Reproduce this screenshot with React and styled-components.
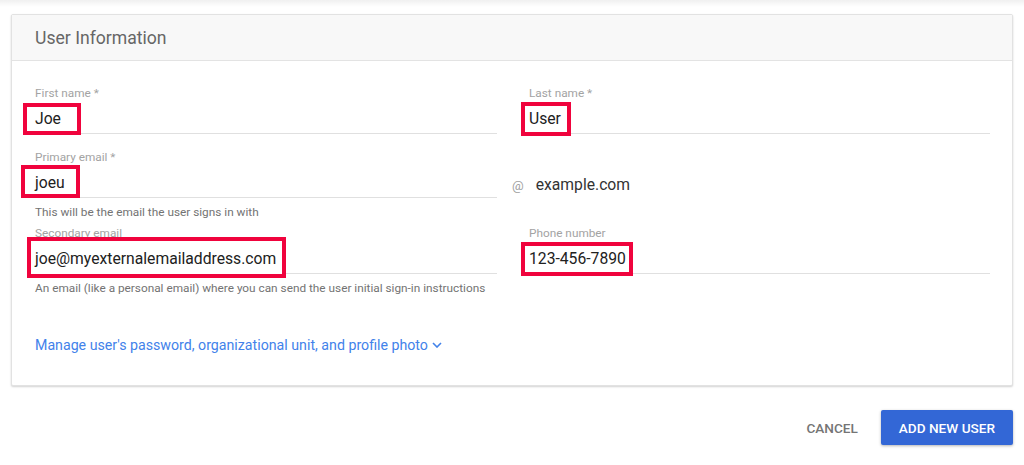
import React from 'react';
import styled, { createGlobalStyle } from 'styled-components';

const GlobalStyle = createGlobalStyle`
  html, body {
    margin: 0;
    padding: 0;
    background: #fff;
    font-family: Roboto, "Liberation Sans", Arial, sans-serif;
  }
  * { box-sizing: border-box; }
`;

const Page = styled.div`
  width: 1024px;
  height: 465px;
  padding: 14px 11px 0;
  background: linear-gradient(rgba(0, 0, 0, 0.06), rgba(0, 0, 0, 0) 7px);
`;

const Card = styled.section`
  background: #fff;
  border: 1px solid #e2e2e2;
  border-radius: 2px;
  box-shadow: 0 1px 2px rgba(0, 0, 0, 0.18);
`;

const CardHeader = styled.header`
  height: 46px;
  padding: 1px 23px 0;
  display: flex;
  align-items: center;
  background: #f8f8f8;
  border-bottom: 1px solid #e3e3e3;
  h2 {
    margin: 0;
    font-size: 17.6px;
    font-weight: 400;
    color: #666;
  }
`;

const CardBody = styled.div`
  padding: 24px 22px 30px 23px;
`;

const Grid = styled.div`
  display: grid;
  grid-template-columns: 462px 461px;
  column-gap: 32px;
`;

const Field = styled.div`
  margin-bottom: ${p => (p.$helper ? 5 : 15)}px;
`;

const Label = styled.div`
  padding-top: 1px;
  font-size: 11.8px;
  line-height: 15px;
  color: #a3a3a3;
`;

const InputLine = styled.div`
  position: relative;
  padding: 6px 0 2px;
  border-bottom: 1px solid #e0e0e0;
`;

const Value = styled.span`
  position: relative;
  z-index: 2;
  font-size: 15.7px;
  line-height: 24px;
  color: #212121;
`;

const Highlight = styled.span`
  position: absolute;
  z-index: 1;
  left: ${p => p.$left}px;
  top: ${p => p.$top}px;
  width: ${p => p.$width}px;
  height: ${p => p.$height}px;
  border: 4px solid #f0033d;
  background: #fff;
`;

const Helper = styled.div`
  margin-top: 6px;
  font-size: 11.8px;
  line-height: 16px;
  color: #737373;
`;

const Domain = styled.div`
  display: flex;
  align-items: baseline;
  gap: 12px;
  margin-left: -17px;
  padding-top: 24px;
  span {
    font-size: 13px;
    color: #a0a0a0;
  }
  strong {
    font-size: 15.7px;
    line-height: 24px;
    font-weight: 400;
    color: #333;
  }
`;

const MoreLink = styled.a`
  display: inline-flex;
  align-items: center;
  gap: 4px;
  margin-top: 34px;
  font-size: 14.2px;
  line-height: 20px;
  color: #4282ea;
  text-decoration: none;
  cursor: pointer;
`;

const Actions = styled.div`
  display: flex;
  justify-content: flex-end;
  align-items: center;
  gap: 23px;
  margin-top: 24px;
`;

const Button = styled.button`
  height: 35px;
  padding: 0 ${p => (p.$primary ? 18 : 0)}px;
  border: none;
  border-radius: 2px;
  font-family: inherit;
  font-size: 13.6px;
  font-weight: 500;
  text-transform: uppercase;
  background: ${p => (p.$primary ? '#3367d6' : 'transparent')};
  color: ${p => (p.$primary ? '#fff' : '#757575')};
  box-shadow: ${p => (p.$primary ? '0 1px 3px rgba(0,0,0,0.3)' : 'none')};
  cursor: pointer;
`;

const TextField = ({ label, value, helper, box }) => (
  <Field $helper={!!helper}>
    <Label>{label}</Label>
    <InputLine>
      {box && <Highlight $left={box[0]} $top={box[1]} $width={box[2]} $height={box[3]} />}
      <Value>{value}</Value>
    </InputLine>
    {helper && <Helper>{helper}</Helper>}
  </Field>
);

const Chevron = () => (
  <svg width="10" height="6" viewBox="0 0 10 6" fill="none">
    <path d="M1 1l4 4 4-4" stroke="#4282ea" strokeWidth="1.6" />
  </svg>
);

export default function App() {
  return (
    <Page>
      <GlobalStyle />
      <Card>
        <CardHeader>
          <h2>User Information</h2>
        </CardHeader>
        <CardBody>
          <Grid>
            <TextField label="First name *" value="Joe" box={[-12, 2, 58, 32]} />
            <TextField label="Last name *" value="User" box={[-8, 1, 50, 34]} />
            <TextField
              label="Primary email *"
              value="joeu"
              box={[-14, 0, 59, 33]}
              helper="This will be the email the user signs in with"
            />
            <Domain>
              <span>@</span>
              <strong>example.com</strong>
            </Domain>
            <TextField
              label="Secondary email"
              value="joe@myexternalemailaddress.com"
              box={[-8, -4, 259, 41]}
              helper="An email (like a personal email) where you can send the user initial sign-in instructions"
            />
            <TextField label="Phone number" value="123-456-7890" box={[-8, 1, 112, 34]} />
          </Grid>
          <MoreLink>
            Manage user's password, organizational unit, and profile photo
            <Chevron />
          </MoreLink>
        </CardBody>
      </Card>
      <Actions>
        <Button>Cancel</Button>
        <Button $primary>Add new user</Button>
      </Actions>
    </Page>
  );
}
